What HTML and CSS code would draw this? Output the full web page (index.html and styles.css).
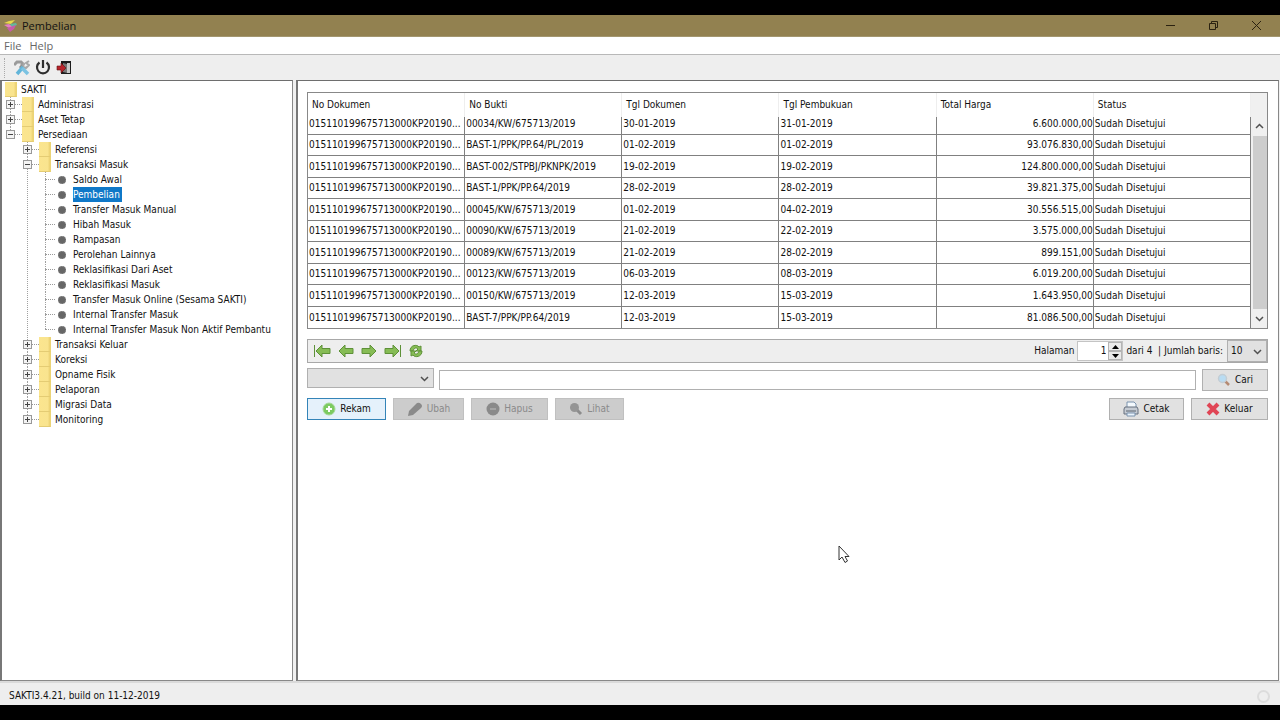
FILE: index.html
```html
<!DOCTYPE html>
<html lang="id">
<head>
	<meta charset="UTF-8">
	<title>Pembelian</title>
	<link rel="stylesheet" href="styles.css">
</head>
<body>
<header class="titlebar">
	<svg class="logo" width="14" height="12" viewBox="0 0 14 12">
		<path d="M0 3l5-2 6-1-4 4z" fill="#E8D84A"/>
		<path d="M0 5l5-1 4 3-4 1z" fill="#E27FC0"/>
		<path d="M6 4l6-1 1 2-5 2z" fill="#62B89C"/>
		<path d="M3 8l9-3-2 4-4 3z" fill="#C65BA8"/>
	</svg>
	<h1>Pembelian</h1>
	<div class="window-buttons">
		<button aria-label="Minimize"><svg width="11" height="11" viewBox="0 0 11 11"><path d="M1 5.500h9"/></svg></button>
		<button aria-label="Restore"><svg width="11" height="11" viewBox="0 0 11 11"><path d="M1.500 3.500h6v6h-6zM3.500 3.500v-2h6v6h-2"/></svg></button>
		<button aria-label="Close"><svg width="11" height="11" viewBox="0 0 11 11"><path d="M1 1l9 9M10 1l-9 9"/></svg></button>
	</div>
</header>
<nav class="menubar">
	<button>File</button>
	<button>Help</button>
</nav>
<div class="toolbar">
	<i class="grip"></i>
	<button aria-label="Pengaturan">
		<svg width="16" height="16" viewBox="0 0 16 16" fill="none">
			<path d="M0 5l3-3h4l2 2-2 2" stroke="#9B9B9B" stroke-width="3"/>
			<path d="M15 1l-3 2 3 2-3 3-3-1 1-4" stroke="#A8A8A8" stroke-width="2"/>
			<path d="M6 6l3 3" stroke="#8E8E8E" stroke-width="3"/>
			<path d="M9 7l-6 7" stroke="#62B5D9" stroke-width="3.500"/>
			<path d="M8 8l6 6" stroke="#7CC3E2" stroke-width="3.500"/>
		</svg>
	</button>
	<button aria-label="Logout">
		<svg width="16" height="16" viewBox="0 0 16 16" fill="none" stroke="#2E2E2E" stroke-width="2.200">
			<path d="M4.500 2.500a6 6 0 1 0 7 0"/>
			<path d="M8 0v8"/>
		</svg>
	</button>
	<button aria-label="Keluar aplikasi">
		<svg width="16" height="16" viewBox="0 0 16 16">
			<path d="M5 1h10v13H5z" fill="#1C1C1C"/>
			<path d="M7 3l4 1v9l-4-1z" fill="#777"/>
			<path d="M11 3h3v10h-3z" fill="#C9C9C9"/>
			<path d="M1 6h4V3l5 5-5 5v-3H1z" fill="#B8232B" stroke="#5A1010" stroke-width=".6"/>
		</svg>
	</button>
</div>
<main>
	<aside class="tree">
		<div class="node"><i class="folder"></i><span>SAKTI</span></div>
		<ul id="tree"></ul>
	</aside>
	<section class="content">
		<div class="grid">
			<div class="table-wrap">
				<table>
					<thead>
					<tr>
						<th>No Dokumen</th>
						<th>No Bukti</th>
						<th>Tgl Dokumen</th>
						<th>Tgl Pembukuan</th>
						<th>Total Harga</th>
						<th>Status</th>
					</tr>
					</thead>
					<tbody id="rows"></tbody>
				</table>
			</div>
			<div class="scrollbar">
				<button aria-label="Naik"><svg width="9" height="7" viewBox="0 0 9 7"><path d="M1 5l3.500-3.500L8 5"/></svg></button>
				<i class="thumb"></i>
				<button aria-label="Turun"><svg width="9" height="7" viewBox="0 0 9 7"><path d="M1 2l3.500 3.500L8 2"/></svg></button>
			</div>
		</div>
		<div class="pager">
			<button aria-label="Halaman pertama"><svg width="18" height="14" viewBox="0 0 18 14"><path d="M1.500 1v12"/><path d="M3 7l6-6v3.500h8v5H9V13z"/></svg></button>
			<button aria-label="Sebelumnya"><svg width="16" height="14" viewBox="0 0 16 14"><path d="M1 7l6-6v3.500h8v5H7V13z"/></svg></button>
			<button aria-label="Berikutnya"><svg width="16" height="14" viewBox="0 0 16 14"><path d="M15 7L9 1v3.500H1v5h8V13z"/></svg></button>
			<button aria-label="Halaman terakhir"><svg width="18" height="14" viewBox="0 0 18 14"><path d="M16.500 1v12"/><path d="M15 7L9 1v3.500H1v5h8V13z"/></svg></button>
			<button aria-label="Muat ulang"><svg width="14" height="14" viewBox="0 0 14 14"><path d="M1 7c0-6 7-7 9-4l2-1v5H7l2-2C7 3 5 4 4 7z"/><path d="M13 7c0 6-7 7-9 4l-2 1V7h5L5 9c2 2 4 1 5-2z"/></svg></button>
			<label class="page-label" for="page">Halaman</label>
			<div class="spinner">
				<input id="page" type="text" value="1">
				<div class="steps">
					<button aria-label="Tambah"><svg width="7" height="4" viewBox="0 0 7 4"><path d="M0 4l3.500-4L7 4z"/></svg></button>
					<button aria-label="Kurang"><svg width="7" height="4" viewBox="0 0 7 4"><path d="M0 0l3.500 4L7 0z"/></svg></button>
				</div>
			</div>
			<span>dari 4 &nbsp;|</span>
			<label class="rows-label" for="limit">Jumlah baris:</label>
			<div class="select limit">
				<select id="limit"><option>10</option></select>
				<svg width="9" height="7" viewBox="0 0 9 7"><path d="M1 2l3.500 3.500L8 2"/></svg>
			</div>
		</div>
		<div class="search">
			<div class="select field">
				<select aria-label="Kolom pencarian"><option></option></select>
				<svg width="9" height="7" viewBox="0 0 9 7"><path d="M1 2l3.500 3.500L8 2"/></svg>
			</div>
			<input type="text" aria-label="Kata kunci">
			<button class="btn cari">
				<svg width="14" height="14" viewBox="0 0 14 14"><path d="M8 8l4 4" stroke="#B58A72" stroke-width="2.500"/><circle cx="5.500" cy="5.500" r="4" fill="#B9DCF2" stroke="#C3CDD4" stroke-width="1.500"/></svg>
				Cari
			</button>
		</div>
		<div class="actions">
			<button class="btn rekam">
				<svg width="14" height="14" viewBox="0 0 14 14"><circle cx="7" cy="7" r="6" fill="#7CCB62" stroke="#A5D898"/><path d="M7 4v6M4 7h6" stroke="#FFF" stroke-width="2"/></svg>
				Rekam
			</button>
			<button class="btn ubah" disabled>
				<svg width="16" height="14" viewBox="0 0 16 14"><path d="M1 14l1-5 8-8q2-1 4 1t0 4l-8 7z" fill="#8A8A8A"/></svg>
				Ubah
			</button>
			<button class="btn hapus" disabled>
				<svg width="14" height="14" viewBox="0 0 14 14"><circle cx="7" cy="7" r="6.500" fill="#8A8A8A"/><path d="M4 7h6" stroke="#A4A4A4" stroke-width="2"/></svg>
				Hapus
			</button>
			<button class="btn lihat" disabled>
				<svg width="14" height="14" viewBox="0 0 14 14"><path d="M8 8l4 4" stroke="#8C8C8C" stroke-width="3"/><circle cx="5.500" cy="5.500" r="4.500" fill="#949494"/></svg>
				Lihat
			</button>
			<button class="btn cetak">
				<svg width="16" height="16" viewBox="0 0 16 16"><path d="M4 7V1h7l2 2v4z" fill="#F4F9FD" stroke="#7B93AE"/><path d="M2 6h12l1 2v5H1V8z" fill="#C5CBD3" stroke="#66707E"/><path d="M3 10h10" stroke="#5B6470"/><path d="M4 12h8v3H4z" fill="#E9F3FC" stroke="#7B93AE"/></svg>
				Cetak
			</button>
			<button class="btn keluar">
				<svg width="14" height="14" viewBox="0 0 14 14"><path d="M2 2l10 10M12 2L2 12" stroke="#E04555" stroke-width="4"/></svg>
				Keluar
			</button>
		</div>
		<svg class="cursor" width="12" height="19" viewBox="0 0 12 19"><path d="M1 1v14l3-3 3 5.500 2.500-1.500L7 11.500h4z" fill="#FFF" stroke="#333"/></svg>
	</section>
</main>
<footer class="status">
	<span>SAKTI3.4.21, build on 11-12-2019</span>
	<i class="ring"></i>
</footer>
<script>
	const tree = [
		{name: 'Administrasi', closed: true},
		{name: 'Aset Tetap', closed: true},
		{
			name: 'Persediaan', children: [
				{name: 'Referensi', closed: true},
				{
					name: 'Transaksi Masuk', children: [
						{name: 'Saldo Awal'},
						{name: 'Pembelian', selected: true},
						{name: 'Transfer Masuk Manual'},
						{name: 'Hibah Masuk'},
						{name: 'Rampasan'},
						{name: 'Perolehan Lainnya'},
						{name: 'Reklasifikasi Dari Aset'},
						{name: 'Reklasifikasi Masuk'},
						{name: 'Transfer Masuk Online (Sesama SAKTI)'},
						{name: 'Internal Transfer Masuk'},
						{name: 'Internal Transfer Masuk Non Aktif Pembantu'}
					]
				},
				{name: 'Transaksi Keluar', closed: true},
				{name: 'Koreksi', closed: true},
				{name: 'Opname Fisik', closed: true},
				{name: 'Pelaporan', closed: true},
				{name: 'Migrasi Data', closed: true},
				{name: 'Monitoring', closed: true}
			]
		}
	];
	const doc = '015110199675713000KP20190...';
	const rows = [
		['00034/KW/675713/2019', '30-01-2019', '31-01-2019', '6.600.000,00'],
		['BAST-1/PPK/PP.64/PL/2019', '01-02-2019', '01-02-2019', '93.076.830,00'],
		['BAST-002/STPBJ/PKNPK/2019', '19-02-2019', '19-02-2019', '124.800.000,00'],
		['BAST-1/PPK/PP.64/2019', '28-02-2019', '28-02-2019', '39.821.375,00'],
		['00045/KW/675713/2019', '01-02-2019', '04-02-2019', '30.556.515,00'],
		['00090/KW/675713/2019', '21-02-2019', '22-02-2019', '3.575.000,00'],
		['00089/KW/675713/2019', '21-02-2019', '28-02-2019', '899.151,00'],
		['00123/KW/675713/2019', '06-03-2019', '08-03-2019', '6.019.200,00'],
		['00150/KW/675713/2019', '12-03-2019', '15-03-2019', '1.643.950,00'],
		['BAST-7/PPK/PP.64/2019', '12-03-2019', '15-03-2019', '81.086.500,00']
	];

	/**
	 * 生成树节点
	 */
	function renderNode(node) {
		const isLeaf = !node.children && !node.closed;
		const name = `<span class="${node.selected ? 'selected' : ''}">${node.name}</span>`;
		if (isLeaf) {
			return `<li><div class="node leaf"><i class="dash"></i><i class="dot"></i>${name}</div></li>`;
		}
		const path = node.closed ? 'M2 4.5h5M4.5 2v5' : 'M2 4.5h5';
		const children = node.children ? `<ul>${node.children.map(renderNode).join('')}</ul>` : '';
		return `<li><div class="node">
			<button class="toggle" aria-label="${node.name}"><svg width="9" height="9" viewBox="0 0 9 9"><path d="${path}"/></svg></button>
			<i class="dash"></i><i class="folder"></i>${name}
		</div>${children}</li>`;
	}

	document.querySelector('#tree').innerHTML = tree.map(renderNode).join('');
	document.querySelector('#rows').innerHTML = rows.map(r => `<tr>
		<td>${doc}</td><td>${r[0]}</td><td>${r[1]}</td><td>${r[2]}</td><td class="price">${r[3]}</td><td>Sudah Disetujui</td>
	</tr>`).join('');
</script>
</body>
</html>
```

FILE: styles.css
```css
* {
	box-sizing: border-box;
}

body {
	margin: 0;
	padding: 15px 0;
	height: 100vh;
	display: flex;
	flex-direction: column;
	background: #000;
	color: #111;
	font: 10px/14px "DejaVu Sans Condensed", "DejaVu Sans", sans-serif;
}

button, input, select {
	font: inherit;
	color: inherit;
	margin: 0;
	padding: 0;
	border: none;
	border-radius: 0;
	background: none;
}

svg {
	display: block;
	flex: none;
}

ul {
	list-style: none;
	margin: 0;
	padding: 0;
}

/* 标题栏 */
.titlebar {
	height: 22px;
	display: flex;
	align-items: center;
	padding-left: 4px;
	background: #928150;
	border-bottom: 1px solid #A39770;
}

.titlebar h1 {
	flex: 1;
	margin: 0 0 0 4px;
	font: 11px/20px "Open Sans", sans-serif;
}

.window-buttons {
	display: flex;
}

.window-buttons button {
	width: 43px;
	height: 20px;
	display: flex;
	align-items: center;
	justify-content: center;
}

.window-buttons button:last-child {
	margin-right: 2px;
}

.window-buttons path {
	fill: none;
	stroke: #2B2210;
}

.menubar {
	height: 18px;
	display: flex;
	gap: 8px;
	padding-left: 4px;
	background: #FFF;
	border-bottom: 1px solid #B8B8B8;
	font: 11px/16px "Open Sans", sans-serif;
	color: #666;
}

.toolbar {
	height: 25px;
	display: flex;
	align-items: center;
	gap: 5px;
	background: #EEE;
}

.grip {
	height: 20px;
	margin: 0 4px;
	border-left: 1px dotted #AAA;
}

/* 主体 */
main {
	flex: 1;
	min-height: 0;
	display: flex;
	gap: 3px;
	background: #F0F0F0;
}

.tree {
	width: 293px;
	background: #FFF;
	border: 1px solid #888;
	border-top-color: #6E6E6E;
	border-left: 2px solid #777;
	padding: 1px 0 0 3px;
}

.tree ul {
	margin-left: 1px;
}

.tree ul ul {
	margin-left: 17px;
}

.tree ul ul ul {
	margin-left: 22px;
}

.tree li {
	background: repeating-linear-gradient(#A0A0A0 0 1px, transparent 1px 2px) 4px 0 / 1px 100% no-repeat;
}

.tree li:last-child {
	background-size: 1px 8px;
}

.tree ul ul ul li {
	background-position: 0 0;
}

.node {
	height: 15px;
	display: flex;
	align-items: center;
	white-space: nowrap;
	line-height: 15px;
}

.toggle {
	width: 9px;
	height: 9px;
	border: 1px solid #999;
	background: #F4F4F4;
}

.toggle svg {
	margin: -1px;
}

.toggle path {
	stroke: #444;
}

.dash {
	width: 7px;
	border-top: 1px dotted #999;
}

.folder {
	width: 12px;
	height: 15px;
	margin-right: 4px;
	background: linear-gradient(90deg, #FBE58E, #F9E48F 80%, #EBD070);
	border-right: 1px solid #EBD476;
	border-bottom: 1px solid #E4CC74;
}

.leaf .dash {
	width: 10px;
}

.dot {
	width: 8px;
	height: 8px;
	margin: 0 7px 0 3px;
	border-radius: 50%;
	background: #666;
	border: 1px dotted #8C8C8C;
}

.selected {
	background: #0F78C8;
	color: #FFF;
	padding-right: 2px;
}

/* 右侧内容 */
.content {
	position: relative;
	flex: 1;
	min-width: 0;
	background: #FFF;
	border: 1px solid #888;
	border-top-color: #6E6E6E;
	border-left: 2px solid #777;
	margin-right: 1px;
	padding: 11px 10px 0 9px;
}

.grid {
	display: flex;
	border: 1px solid #888;
}

.table-wrap {
	flex: 1;
	min-width: 0;
}

table {
	width: 100%;
	table-layout: fixed;
	border-spacing: 0;
}

th {
	height: 24px;
	padding: 0 4px;
	font-weight: normal;
	text-align: left;
	border-right: 1px solid #EEE;
}

td {
	height: 21px;
	padding: 0 0 0 1px;
	line-height: 14px;
	border-right: 1px solid #808080;
	border-bottom: 1px solid #808080;
	white-space: nowrap;
	overflow: hidden;
}

tr:nth-child(odd) td {
	height: 22px;
}

/* 首行被表头遮住一部分 */
tbody tr:first-child td {
	height: 18px;
	padding-bottom: 3px;
}

tr:last-child td {
	border-bottom: none;
}

.price {
	text-align: right;
}

.scrollbar {
	width: 16px;
	display: flex;
	flex-direction: column;
	padding-top: 24px;
	background: #F0F0F0;
}

.scrollbar button {
	height: 19px;
	display: flex;
	align-items: center;
	justify-content: center;
}

.scrollbar path, .select path {
	fill: none;
	stroke: #505050;
	stroke-width: 1.5;
}

.thumb {
	flex: 1;
	margin-left: 2px;
	background: #CDCDCD;
}

.pager {
	height: 24px;
	margin-top: 10px;
	display: flex;
	align-items: center;
	padding-left: 5px;
	background: #EEE;
	border: 1px solid #A8A8A8;
}

.pager > button {
	margin-right: 7px;
}

.pager > button path {
	fill: #86BC55;
	stroke: #5E9138;
}

.page-label {
	margin-left: auto;
	padding-right: 3px;
}

.spinner {
	width: 46px;
	height: 20px;
	display: flex;
	margin-right: 3px;
	background: #FFF;
	border: 1px solid #C4C4C4;
}

.spinner input {
	flex: 1;
	min-width: 0;
	padding-right: 2px;
	text-align: right;
}

.steps {
	width: 14px;
	display: flex;
	flex-direction: column;
}

.steps button {
	flex: 1;
	display: flex;
	align-items: center;
	justify-content: center;
	background: #EAEAEA;
	border: 1px solid #B4B4B4;
}

.rows-label {
	margin: 0 4px 0 3px;
}

.select {
	position: relative;
}

.select select {
	display: block;
	width: 100%;
	height: 100%;
	padding-left: 3px;
	appearance: none;
	background: #E1E1E1;
	border: 1px solid #B0B0B0;
}

.select svg {
	position: absolute;
	right: 5px;
	top: 50%;
	margin-top: -3px;
	pointer-events: none;
}

.limit {
	width: 40px;
	height: 22px;
}

.search {
	display: flex;
	gap: 5px;
	margin-top: 5px;
}

.field {
	width: 127px;
	height: 20px;
}

.search input {
	flex: 1;
	height: 20px;
	margin-top: 2px;
	border: 1px solid #B0B0B0;
	background: #FFF;
}

.btn {
	height: 22px;
	display: flex;
	align-items: center;
	justify-content: center;
	gap: 4px;
	background: #E1E1E1;
	border: 1px solid #B0B0B0;
}

.btn:disabled {
	background: #CCC;
	border-color: #C0C0C0;
	color: #8A8A8A;
}

.cari {
	width: 66px;
	margin: 1px 0 0 1px;
}

.actions {
	display: flex;
	gap: 7px;
	margin-top: 7px;
}

.rekam {
	width: 79px;
	background: #E5F1FB;
	border-color: #3484B8;
}

.ubah {
	width: 71px;
}

.hapus {
	width: 77px;
}

.lihat {
	width: 69px;
}

.cetak {
	width: 75px;
	margin-left: auto;
}

.keluar {
	width: 77px;
}

/* 鼠标指针 */
.cursor {
	position: absolute;
	left: 540px;
	top: 464px;
}

.status {
	height: 24px;
	display: flex;
	align-items: center;
	justify-content: space-between;
	padding: 4px 10px 0 9px;
	background: #EEE;
	border-top: 2px solid #DADADA;
}

.ring {
	width: 13px;
	height: 13px;
	border: 2px solid #DCDCDC;
	border-radius: 50%;
}
```
